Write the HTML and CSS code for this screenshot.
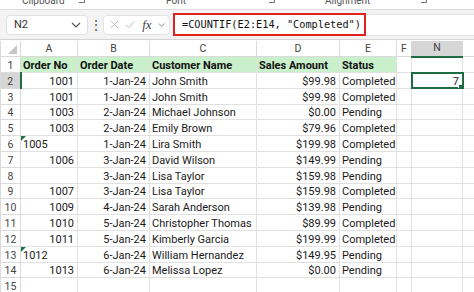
FILE: index.html
```html
<!DOCTYPE html>
<html lang="en">
<head>
    <meta charset="UTF-8">
    <meta name="viewport" content="width=device-width, initial-scale=1.0">
    <title>COUNTIF example</title>
    <link rel="stylesheet" href="styles.css">
</head>
<body>
    <div class="ribbon">
        <span class="group-label clipboard">Clipboard</span>
        <span class="launcher l1"></span>
        <span class="group-label font">Font</span>
        <span class="launcher l2"></span>
        <span class="group-label align">Alignment</span>
        <span class="launcher l3"></span>
    </div>

    <div class="formula-bar">
        <div class="name-box">
            <span>N2</span>
            <svg class="chev" width="10" height="6" viewBox="0 0 10 6"><path d="M1 1l4 4 4-4" fill="none" stroke="#555" stroke-width="1.2"/></svg>
        </div>
        <div class="grip">⋮</div>
        <div class="fx-box">
            <svg width="11" height="11" viewBox="0 0 11 11"><path d="M1 1l9 9M10 1l-9 9" stroke="#b8b8b8" stroke-width="1.1"/></svg>
            <svg width="12" height="11" viewBox="0 0 12 11"><path d="M1 6l3.5 3.5L11 1.5" fill="none" stroke="#b8b8b8" stroke-width="1.1"/></svg>
            <span class="fx">fx</span>
            <svg class="chev" width="9" height="6" viewBox="0 0 10 6"><path d="M1 1l4 4 4-4" fill="none" stroke="#777" stroke-width="1.1"/></svg>
        </div>
        <div class="formula-input">
            <div class="formula-mark">=COUNTIF(E2:E14, "Completed")</div>
        </div>
    </div>

    <table class="sheet">
        <colgroup>
            <col class="c-rh"><col class="c-a"><col class="c-b"><col class="c-c"><col class="c-d"><col class="c-e"><col class="c-f"><col class="c-n"><col class="c-o">
        </colgroup>
        <tr class="col-heads">
            <th class="corner"><span class="corner-tri"></span></th>
            <th>A</th><th>B</th><th>C</th><th>D</th><th>E</th><th>F</th><th class="sel-col">N</th><th></th>
        </tr>
        <tr class="titles">
            <th>1</th>
            <td class="hd">Order No</td><td class="hd">Order Date</td><td class="hd">Customer Name</td><td class="hd">Sales Amount</td><td class="hd">Status</td><td></td><td></td><td></td>
        </tr>
        <tr>
            <th class="sel-row">2</th>
            <td class="num">1001</td><td class="num">1-Jan-24</td><td>John Smith</td><td class="num">$99.98</td><td>Completed</td><td></td><td class="num active">7</td><td></td>
        </tr>
        <tr>
            <th>3</th>
            <td class="num">1001</td><td class="num">1-Jan-24</td><td>John Smith</td><td class="num">$99.98</td><td>Completed</td><td></td><td></td><td></td>
        </tr>
        <tr>
            <th>4</th>
            <td class="num">1003</td><td class="num">2-Jan-24</td><td>Michael Johnson</td><td class="num">$0.00</td><td>Pending</td><td></td><td></td><td></td>
        </tr>
        <tr>
            <th>5</th>
            <td class="num">1003</td><td class="num">2-Jan-24</td><td>Emily Brown</td><td class="num">$79.96</td><td>Completed</td><td></td><td></td><td></td>
        </tr>
        <tr>
            <th>6</th>
            <td class="txtnum">1005</td><td class="num">1-Jan-24</td><td>Lira Smith</td><td class="num">$199.98</td><td>Completed</td><td></td><td></td><td></td>
        </tr>
        <tr>
            <th>7</th>
            <td class="num">1006</td><td class="num">3-Jan-24</td><td>David Wilson</td><td class="num">$149.99</td><td>Pending</td><td></td><td></td><td></td>
        </tr>
        <tr>
            <th>8</th>
            <td></td><td class="num">3-Jan-24</td><td>Lisa Taylor</td><td class="num">$159.98</td><td>Pending</td><td></td><td></td><td></td>
        </tr>
        <tr>
            <th>9</th>
            <td class="num">1007</td><td class="num">3-Jan-24</td><td>Lisa Taylor</td><td class="num">$159.98</td><td>Completed</td><td></td><td></td><td></td>
        </tr>
        <tr>
            <th>10</th>
            <td class="num">1009</td><td class="num">4-Jan-24</td><td>Sarah Anderson</td><td class="num">$139.98</td><td>Pending</td><td></td><td></td><td></td>
        </tr>
        <tr>
            <th>11</th>
            <td class="num">1010</td><td class="num">5-Jan-24</td><td>Christopher Thomas</td><td class="num">$89.99</td><td>Completed</td><td></td><td></td><td></td>
        </tr>
        <tr>
            <th>12</th>
            <td class="num">1011</td><td class="num">5-Jan-24</td><td>Kimberly Garcia</td><td class="num">$199.99</td><td>Completed</td><td></td><td></td><td></td>
        </tr>
        <tr>
            <th>13</th>
            <td class="txtnum">1012</td><td class="num">6-Jan-24</td><td>William Hernandez</td><td class="num">$149.95</td><td>Pending</td><td></td><td></td><td></td>
        </tr>
        <tr>
            <th>14</th>
            <td class="num">1013</td><td class="num">6-Jan-24</td><td>Melissa Lopez</td><td class="num">$0.00</td><td>Pending</td><td></td><td></td><td></td>
        </tr>
        <tr>
            <th>15</th>
            <td></td><td></td><td></td><td></td><td></td><td></td><td></td><td></td>
        </tr>
    </table>
</body>
</html>
```

FILE: styles.css
```css
body {
    margin: 0;
    width: 474px;
    height: 292px;
    overflow: hidden;
    background-color: #fff;
    font-family: Roboto, "Liberation Sans", sans-serif;
    color: #1a1a1a;
}

/* ribbon strip, cut off at the top */
.ribbon {
    position: relative;
    height: 9px;
    overflow: hidden;
    border-bottom: 1px solid #dcdcdc;
    font-size: 10px;
    color: #555;
}

.group-label {
    position: absolute;
    top: -5px;
}

.clipboard { left: 22px; }
.font { left: 166px; }
.align { left: 325px; }

.launcher {
    position: absolute;
    top: -3px;
    width: 5px;
    height: 5px;
    border-right: 1px solid #777;
    border-bottom: 1px solid #777;
}

.l1 { left: 79px; }
.l2 { left: 269px; }
.l3 { left: 421px; }

.formula-bar {
    display: flex;
    align-items: center;
    height: 29px;
    padding: 0 0 0 6px;
    background-color: #f3f3f3;
    border-bottom: 1px solid #d4d4d4;
}

.name-box {
    display: flex;
    align-items: center;
    justify-content: space-between;
    width: 82px;
    height: 20px;
    padding: 0 6px 0 7px;
    box-sizing: border-box;
    background-color: #fff;
    border: 1px solid #e2e2e2;
    border-radius: 4px;
    font-size: 11px;
    color: #333;
}

.grip {
    width: 15px;
    text-align: center;
    font-size: 12px;
    color: #444;
}

.fx-box {
    display: flex;
    align-items: center;
    gap: 6px;
    width: 67px;
    height: 20px;
    padding: 0 4px 0 6px;
    box-sizing: border-box;
    background-color: #fff;
    border: 1px solid #e2e2e2;
    border-radius: 4px;
}

.fx {
    font-family: "Liberation Serif", serif;
    font-style: italic;
    font-size: 13px;
    color: #444;
    margin-left: 1px;
}

.formula-input {
    flex: 1;
    height: 20px;
    margin-left: 3px;
    background-color: #fff;
    border-top: 1px solid #e2e2e2;
    border-bottom: 1px solid #e2e2e2;
    position: relative;
}

.formula-mark {
    position: absolute;
    left: 0;
    top: -2px;
    width: 193px;
    height: 23px;
    box-sizing: border-box;
    border: 2px solid #e0211d;
    padding: 3px 0 0 7px;
    font-family: "DejaVu Sans Mono", monospace;
    font-size: 10.25px;
    color: #111;
    white-space: nowrap;
}

/* grid */
.sheet {
    width: 522px;
    border-collapse: collapse;
    table-layout: fixed;
    margin-top: 1px;
    font-size: 11px;
}

.c-rh { width: 20px; }
.c-a { width: 57px; }
.c-b { width: 72px; }
.c-c { width: 107px; }
.c-d { width: 83px; }
.c-e { width: 57px; }
.c-f { width: 15px; }
.c-n { width: 51px; }
.c-o { width: 60px; }

.sheet tr {
    height: 15.8px;
}

.sheet td,
.sheet th {
    padding: 0 3px 0 2px;
    border: 1px solid #e1e1e1;
    white-space: nowrap;
    overflow: hidden;
    vertical-align: bottom;
    line-height: 12px;
}

.sheet th {
    font-weight: normal;
    color: #444;
    font-size: 10.5px;
    text-align: center;
    padding: 0;
    border-color: #dadada;
}

.col-heads th {
    vertical-align: middle;
    border-top: none;
}

.corner {
    position: relative;
}

.corner-tri {
    position: absolute;
    right: 3px;
    bottom: 2px;
    width: 0;
    height: 0;
    border-left: 9px solid transparent;
    border-bottom: 9px solid #c6c6c6;
}

.sel-col {
    background-color: #d6d6d6;
    border-bottom: 2px solid #1e6c41 !important;
    color: #1e6c41;
}

.sel-row {
    background-color: #d6d6d6;
    border-right: 2px solid #1e6c41 !important;
    color: #1e6c41;
}

.hd {
    background-color: #c9efcb;
    font-weight: bold;
    color: #111;
}

.num {
    text-align: right;
}

.txtnum {
    position: relative;
}

.txtnum::before {
    content: "";
    position: absolute;
    left: 0;
    top: 0;
    border-top: 5px solid #1e7145;
    border-right: 5px solid transparent;
}

.active {
    position: relative;
    outline: 2px solid #1e6c41;
    outline-offset: -1px;
    overflow: visible;
}

.active::after {
    content: "";
    position: absolute;
    right: -3px;
    bottom: -3px;
    width: 5px;
    height: 5px;
    background-color: #1e6c41;
    border: 1px solid #fff;
}
```
